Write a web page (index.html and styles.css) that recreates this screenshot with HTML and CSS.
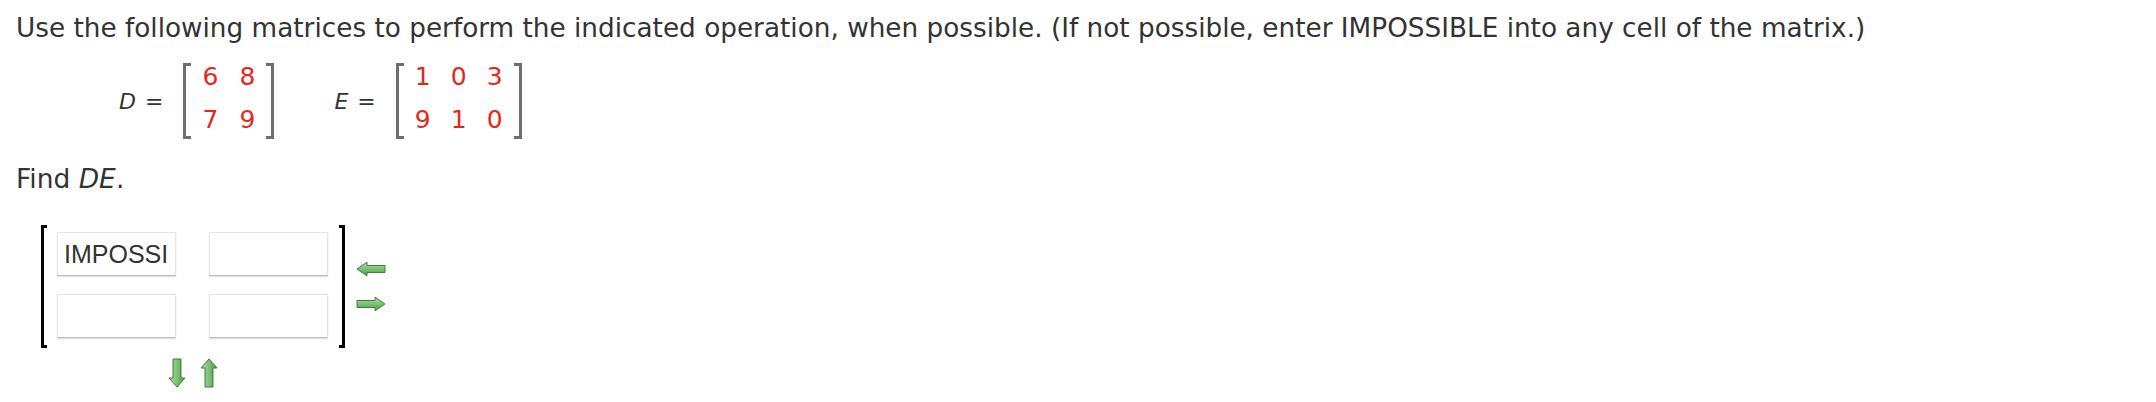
FILE: index.html
```html
<!DOCTYPE html>
<html lang="en">
<head>
<meta charset="utf-8">
<title>Matrix operation</title>
<link rel="stylesheet" href="styles.css">
</head>
<body>
<div class="page">
  <p class="prompt">Use the following matrices to perform the indicated operation, when possible. (If not possible, enter IMPOSSIBLE into any cell of the matrix.)</p>
  <div class="given">
    <div class="eq">
      <span class="var">D</span><span class="eqsign">=</span>
      <div class="mat">
        <span class="br br-l"></span>
        <div class="cells c2"><span>6</span><span>8</span><span>7</span><span>9</span></div>
        <span class="br br-r"></span>
      </div>
    </div>
    <div class="eq">
      <span class="var">E</span><span class="eqsign">=</span>
      <div class="mat">
        <span class="br br-l"></span>
        <div class="cells c3"><span>1</span><span>0</span><span>3</span><span>9</span><span>1</span><span>0</span></div>
        <span class="br br-r"></span>
      </div>
    </div>
  </div>
  <p class="find">Find <i>DE</i>.</p>
  <div class="answer">
    <div class="answer-row">
      <div class="amat">
        <span class="abr abr-l"></span>
        <div class="agrid">
          <input class="cell" type="text" value="IMPOSSIBLE">
          <input class="cell" type="text" value="">
          <input class="cell" type="text" value="">
          <input class="cell" type="text" value="">
        </div>
        <span class="abr abr-r"></span>
      </div>
      <div class="hctrl">
        <svg class="harrow" width="30" height="16" viewBox="0 0 30 16">
          <defs>
            <linearGradient id="gh" x1="0" y1="0" x2="0" y2="1">
              <stop offset="0" stop-color="#b2dcab"/>
              <stop offset="0.5" stop-color="#7fc078"/>
              <stop offset="1" stop-color="#4c9748"/>
            </linearGradient>
          </defs>
          <path d="M1 8 L11 1.2 V4.5 H29 V11.5 H11 V14.8 Z" fill="url(#gh)" stroke="#3c7f3b" stroke-width="1" stroke-linejoin="round"/>
        </svg>
        <svg class="harrow" width="30" height="16" viewBox="0 0 30 16">
          <path d="M29 8 L19 1.2 V4.5 H1 V11.5 H19 V14.8 Z" fill="url(#gh)" stroke="#3c7f3b" stroke-width="1" stroke-linejoin="round"/>
        </svg>
      </div>
    </div>
    <div class="vctrl">
      <svg class="varrow" width="18" height="30" viewBox="0 0 18 30">
        <defs>
          <linearGradient id="gv" x1="0" y1="0" x2="1" y2="0">
            <stop offset="0" stop-color="#b2dcab"/>
            <stop offset="0.5" stop-color="#7fc078"/>
            <stop offset="1" stop-color="#4c9748"/>
          </linearGradient>
        </defs>
        <path d="M5 1 H13 V20 H17 L9 29 L1 20 H5 Z" fill="url(#gv)" stroke="#3c7f3b" stroke-width="1" stroke-linejoin="round"/>
      </svg>
      <svg class="varrow" width="18" height="30" viewBox="0 0 18 30">
        <path d="M9 1 L17 10 H13 V29 H5 V10 H1 Z" fill="url(#gv)" stroke="#3c7f3b" stroke-width="1" stroke-linejoin="round"/>
      </svg>
    </div>
  </div>
</div>
</body>
</html>
```
FILE: styles.css
```css
html, body {
  margin: 0;
  padding: 0;
  background: #ffffff;
}

.page {
  font-family: "DejaVu Sans", sans-serif;
  color: #333333;
}

.prompt {
  margin: 0;
  padding: 12px 0 0 16px;
  font-size: 26.3px;
  line-height: 32px;
  white-space: nowrap;
}

.given {
  display: flex;
  align-items: center;
  gap: 60px;
  margin-top: 11px;
  padding-left: 119px;
}

.eq {
  display: flex;
  align-items: center;
}

.var {
  font-style: italic;
  font-size: 22px;
  padding-top: 6px;
}

.eqsign {
  font-size: 22px;
  margin-left: 9px;
  margin-right: 20px;
  padding-top: 6px;
}

.mat {
  display: flex;
  align-items: center;
}

.br {
  width: 8px;
  height: 76px;
  box-sizing: border-box;
  border: 3px solid #6e6e6e;
  margin-top: 6px;
}

.br-l {
  border-right: none;
}

.br-r {
  border-left: none;
}

.cells {
  display: grid;
  column-gap: 21px;
  padding: 0 11px;
  font-size: 25px;
  line-height: 43px;
  color: #e5271c;
  text-align: center;
}

.c2 {
  grid-template-columns: repeat(2, 16px);
}

.c3 {
  grid-template-columns: repeat(3, 16px);
  column-gap: 20px;
}

.find {
  margin: 22px 0 0 0;
  padding-left: 16px;
  font-size: 26.5px;
  line-height: 32px;
}

.find i {
  font-style: italic;
}

.answer {
  margin-top: 30px;
  margin-left: 41px;
}

.answer-row {
  display: flex;
  align-items: center;
}

.amat {
  display: flex;
  align-items: stretch;
  height: 123px;
}

.abr {
  width: 6px;
  box-sizing: border-box;
  border: 3px solid #000000;
}

.abr-l {
  border-right: none;
  margin-right: 10px;
}

.abr-r {
  border-left: none;
  margin-left: 11px;
}

.agrid {
  display: grid;
  grid-template-columns: 119px 119px;
  grid-auto-rows: 44px;
  column-gap: 33px;
  row-gap: 18px;
  padding-top: 7px;
}

.cell {
  width: 119px;
  height: 44px;
  box-sizing: border-box;
  margin: 0;
  padding: 0 6px;
  border: 1px solid #e4e4e4;
  border-bottom: 1px solid #bdbdbd;
  box-shadow: 0 1px 1px rgba(0, 0, 0, 0.12);
  border-radius: 0;
  background: #ffffff;
  font-family: "Liberation Sans", Arial, sans-serif;
  font-size: 25px;
  color: #333333;
  outline: none;
}

.hctrl {
  display: flex;
  flex-direction: column;
  gap: 19px;
  margin-left: 11px;
}

.harrow,
.varrow {
  display: block;
}

.vctrl {
  display: flex;
  justify-content: center;
  gap: 14px;
  width: 271px;
  margin-left: 16px;
  margin-top: 10px;
}
```
